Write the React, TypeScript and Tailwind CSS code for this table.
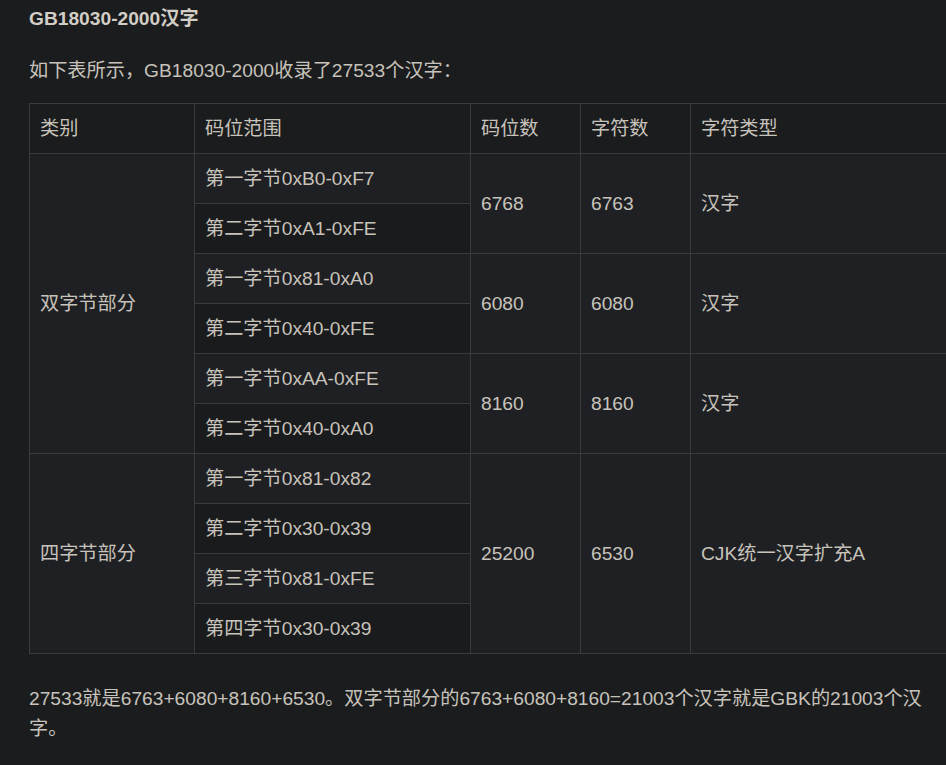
import React from 'react';

type Row = {
  group?: { label: string; span: number };
  range: string;
  counts?: { code: string; chars: string; type: string; span: number };
};

const rows: Row[] = [
  { group: { label: '双字节部分', span: 6 }, range: '第一字节0xB0-0xF7', counts: { code: '6768', chars: '6763', type: '汉字', span: 2 } },
  { range: '第二字节0xA1-0xFE' },
  { range: '第一字节0x81-0xA0', counts: { code: '6080', chars: '6080', type: '汉字', span: 2 } },
  { range: '第二字节0x40-0xFE' },
  { range: '第一字节0xAA-0xFE', counts: { code: '8160', chars: '8160', type: '汉字', span: 2 } },
  { range: '第二字节0x40-0xA0' },
  { group: { label: '四字节部分', span: 4 }, range: '第一字节0x81-0x82', counts: { code: '25200', chars: '6530', type: 'CJK统一汉字扩充A', span: 4 } },
  { range: '第二字节0x30-0x39' },
  { range: '第三字节0x81-0xFE' },
  { range: '第四字节0x30-0x39' },
];

const cell = 'border border-[#3a3b3d] h-[50px] pl-[10px] pr-2 pt-[2px] pb-0 text-left align-middle font-normal';

export default function App() {
  return (
    <div
      className="w-[946px] h-[765px] overflow-hidden bg-[#1b1c1e] text-[#c7c3bb] text-[19.2px] pl-[29px] pr-[16px]"
      style={{ fontFamily: '"Liberation Sans", "Noto Sans CJK SC", sans-serif' }}
    >
      <h3 className="mt-[4px] leading-[30px] font-bold text-[#d2cec6]">GB18030-2000汉字</h3>

      <p className="mt-[22px] leading-[30px]">如下表所示，GB18030-2000收录了27533个汉字：</p>

      <table className="mt-[17px] border-collapse table-fixed w-[1000px]">
        <colgroup>
          <col className="w-[165px]" />
          <col className="w-[276px]" />
          <col className="w-[110px]" />
          <col className="w-[110px]" />
          <col className="w-[339px]" />
        </colgroup>
        <thead>
          <tr className="bg-[#1b1c1e]">
            <th className={cell}>类别</th>
            <th className={cell}>码位范围</th>
            <th className={cell}>码位数</th>
            <th className={cell}>字符数</th>
            <th className={cell}>字符类型</th>
          </tr>
        </thead>
        <tbody>
          {rows.map((r, i) => (
            <tr key={r.range} className={i % 2 === 0 ? 'bg-[#1f2023]' : 'bg-[#1a1b1d]'}>
              {r.group && (
                <td rowSpan={r.group.span} className={`${cell} bg-[#1f2023]`}>
                  {r.group.label}
                </td>
              )}
              <td className={cell}>{r.range}</td>
              {r.counts && (
                <>
                  <td rowSpan={r.counts.span} className={`${cell} bg-[#1f2023]`}>{r.counts.code}</td>
                  <td rowSpan={r.counts.span} className={`${cell} bg-[#1f2023]`}>{r.counts.chars}</td>
                  <td rowSpan={r.counts.span} className={`${cell} bg-[#1f2023]`}>{r.counts.type}</td>
                </>
              )}
            </tr>
          ))}
        </tbody>
      </table>

      <p className="mt-[30px] leading-[30px]">
        27533就是6763+6080+8160+6530。双字节部分的6763+6080+8160=21003个汉字就是GBK的21003个汉字。
      </p>
    </div>
  );
}
